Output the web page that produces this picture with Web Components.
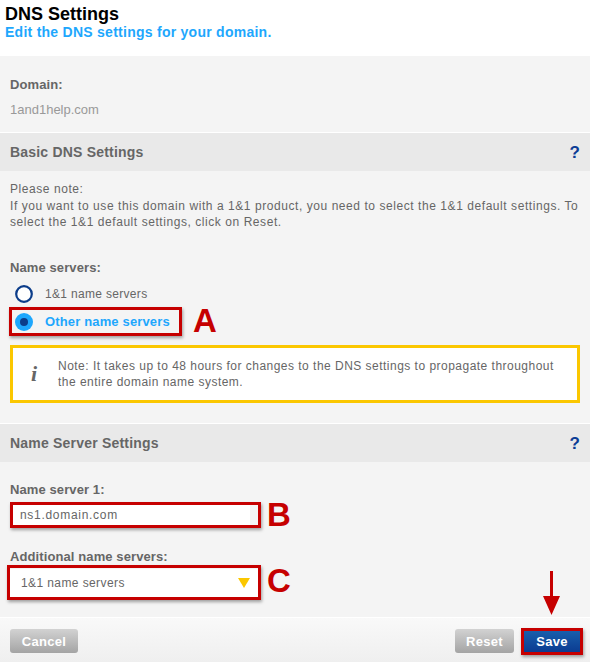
<!DOCTYPE html>
<html><head><meta charset="utf-8"><style>
html,body{margin:0;padding:0;background:#fff}
body{font:12px "Liberation Sans",Arial,sans-serif;color:#666;width:594px;height:662px;overflow:hidden}
</style></head><body>
<dns-app></dns-app>
<script>
function el(name,css,html){customElements.define(name,class extends HTMLElement{connectedCallback(){if(this.shadowRoot)return;const s=this.attachShadow({mode:'open'});s.innerHTML='<style>'+css+'</style>'+html(this);}});}
el('dns-section-head',`:host{display:flex;align-items:center;justify-content:space-between;height:38px;background:#e9e9e9;border-top:1px solid #fff;padding:0 10px;box-sizing:content-box;font:bold 14px/38px "Liberation Sans",sans-serif;letter-spacing:.2px;color:#666}
.q{color:#0c3d96;font-size:17px;letter-spacing:0;position:relative;top:1px}`,t=>`<span><slot></slot></span><span class="q">?</span>`);
el('dns-radio',`:host{display:flex;align-items:center;height:28px;font:12px "Liberation Sans",sans-serif;color:#666;letter-spacing:.32px;padding-left:15px}
:host([checked]){color:#1ea7fd;font-weight:bold;font-size:13px;letter-spacing:.15px}
svg{width:18px;height:18px;margin-right:12px;flex:none}`,t=>t.hasAttribute('checked')?`<svg viewBox="0 0 18 18"><circle cx="9" cy="9" r="9" fill="#1ea7fd"/><circle cx="9" cy="9" r="4" fill="#0c3d8a"/></svg><slot></slot>`:`<svg viewBox="0 0 18 18"><circle cx="9" cy="9" r="7.8" fill="#fff" stroke="#0c3d8a" stroke-width="2.2"/></svg><slot></slot>`);
el('dns-note',`:host{display:flex;align-items:center;box-sizing:border-box;width:570px;height:58px;margin-left:10px;border:3px solid #fbc700;background:#fff;padding-left:16px;font:12px/16px "Liberation Sans",sans-serif;letter-spacing:.48px;color:#666}
i{font:italic bold 22px "Liberation Serif",serif;color:#666;width:29px;flex:none;padding-left:2px;box-sizing:border-box;letter-spacing:0}
span{max-width:505px}`,t=>`<i>i</i><span><slot></slot></span>`);
el('dns-button',`:host{display:inline-flex;align-items:center;justify-content:center;box-sizing:border-box;height:24px;border-radius:3px;font:bold 13px "Liberation Sans",sans-serif;letter-spacing:.3px;color:#fff;background:linear-gradient(#d2d2d2,#a4a4a4)}
:host([primary]){background:linear-gradient(#1a62ae,#0a3a90);border-radius:0}`,t=>`<slot></slot>`);
el('dns-mark',`:host{position:absolute;box-sizing:border-box;border:3px solid #c60000;box-shadow:1px 2px 3px rgba(0,0,0,.35);display:block}`,t=>``);
el('dns-letter',`:host{position:absolute;font:bold 33px/1 "Liberation Sans",sans-serif;color:#c60000}`,t=>`<slot></slot>`);
el('dns-app',`:host{display:block;position:relative;width:590px;height:662px}
header{height:56px;box-sizing:border-box;padding:4px 0 0 5px;background:#fff}
h1{margin:0;font:bold 18px/20px "Liberation Sans",sans-serif;color:#000}
h2{margin:0;font:bold 14px/17px "Liberation Sans",sans-serif;color:#1ea7fd;letter-spacing:.26px}
.dom{background:#f4f4f4;height:76px;box-sizing:border-box;padding:21px 10px 0}
b{font:bold 13px/16px "Liberation Sans",sans-serif;letter-spacing:.1px;color:#666;display:block}
.val{color:#999;font-size:13px;line-height:16px;margin-top:9px}
.body{background:#f4f4f4}
.basic{height:252px;box-sizing:border-box;padding-top:10px}
.p{padding:0 10px;font:12px/16.5px "Liberation Sans",sans-serif;letter-spacing:.56px;color:#666}
.ns{margin:29px 10px 0}
.rad{margin-top:4px}
.note{margin-top:9px}
.set{height:155px;box-sizing:border-box;padding:20px 10px 0;position:relative}
.field{box-sizing:border-box;width:240px;height:22px;background:#fff;font:12px/22px "Liberation Sans",sans-serif;letter-spacing:.7px;padding-left:10px;margin-top:6px;color:#666}
.sel{box-sizing:border-box;width:250px;height:30px;margin:4px 0 0 -2px;background:#fff;border-bottom:2px solid #ccc;display:flex;align-items:center;justify-content:space-between;padding:0 8px 0 13px;font:12px "Liberation Sans",sans-serif;letter-spacing:.4px;color:#666}
.sel svg{width:12px;height:10px}
.add{margin-top:23px}
footer{display:flex;align-items:center;justify-content:space-between;height:45px;box-sizing:border-box;border-top:1px solid #fff;padding:2px 10px 0 10px;background:linear-gradient(#f9f9f9,#efefef)}
.r{display:flex;gap:10px;align-items:center}
.arrow{position:absolute;left:541px;top:571px;width:20px;height:44px}`,t=>`
<header><h1>DNS Settings</h1><h2>Edit the DNS settings for your domain.</h2></header>
<div class="dom"><b>Domain:</b><div class="val">1and1help.com</div></div>
<dns-section-head>Basic DNS Settings</dns-section-head>
<div class="body basic">
<div class="p">Please note:<br>If you want to use this domain with a 1&amp;1 product, you need to select the 1&amp;1 default settings. To select the 1&amp;1 default settings, click on Reset.</div>
<b class="ns">Name servers:</b>
<div class="rad"><dns-radio>1&amp;1 name servers</dns-radio><dns-radio checked>Other name servers</dns-radio></div>
<div class="note"><dns-note>Note: It takes up to 48 hours for changes to the DNS settings to propagate throughout the entire domain name system.</dns-note></div>
</div>
<dns-section-head>Name Server Settings</dns-section-head>
<div class="body set">
<b>Name server 1:</b>
<div class="field">ns1.domain.com</div>
<b class="add">Additional name servers:</b>
<div class="sel"><span>1&amp;1 name servers</span><svg viewBox="0 0 12 10"><path d="M0 0H12L6 10Z" fill="#fbc700"/></svg></div>
</div>
<footer><dns-button style="width:68px">Cancel</dns-button><div class="r"><dns-button style="width:59px">Reset</dns-button><dns-button primary style="width:56px">Save</dns-button></div></footer>
<dns-mark style="left:9px;top:307px;width:173px;height:29px"></dns-mark>
<dns-mark style="left:10px;top:502px;width:251px;height:26px"></dns-mark>
<dns-mark style="left:7px;top:565px;width:254px;height:35px"></dns-mark>
<dns-mark style="left:521px;top:628px;width:62px;height:27px"></dns-mark>
<dns-letter style="left:193px;top:304px">A</dns-letter>
<dns-letter style="left:267px;top:498px">B</dns-letter>
<dns-letter style="left:267px;top:564px">C</dns-letter>
<svg class="arrow" viewBox="0 0 20 44"><path d="M9 0H12V25H19L10.500 44L2 25H9Z" fill="#c60000"/></svg>
`);
</script>
</body></html>
